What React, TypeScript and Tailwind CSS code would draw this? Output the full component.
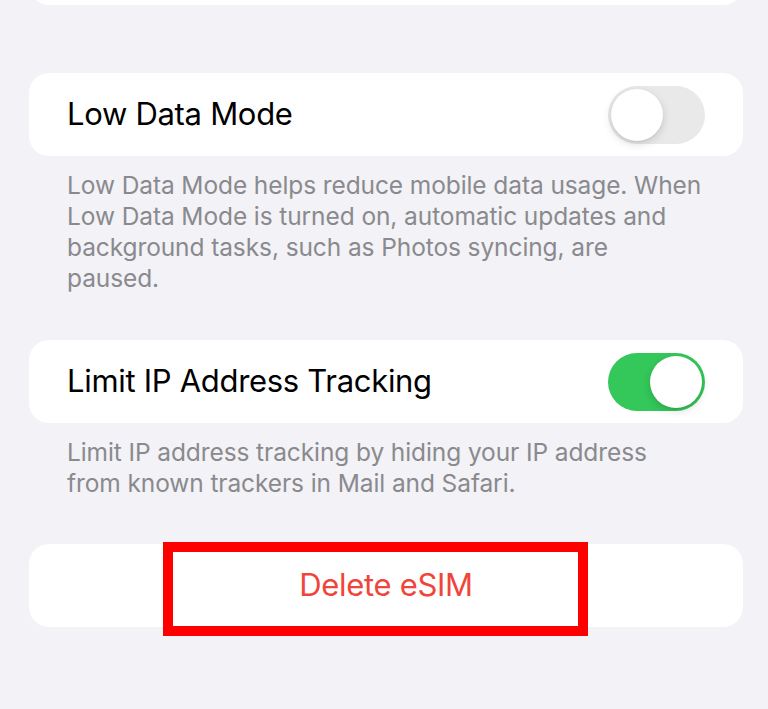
import React from 'react';

const font = { fontFamily: 'Inter, "Noto Sans", "Liberation Sans", sans-serif' };

interface ToggleProps {
  on: boolean;
}

const Toggle: React.FC<ToggleProps> = ({ on }) => (
  <div
    className={`flex items-center w-[97px] h-[58px] rounded-full p-[3px] ${
      on ? 'bg-[#34c759] justify-end' : 'bg-[#e9e9ea] justify-start'
    }`}
  >
    <div className="w-[52px] h-[52px] rounded-full bg-white shadow-[0_3px_8px_rgba(0,0,0,0.15),0_1px_1px_rgba(0,0,0,0.06)]" />
  </div>
);

interface RowProps {
  title: string;
  on: boolean;
}

const ToggleRow: React.FC<RowProps> = ({ title, on }) => (
  <div className="flex items-center justify-between h-[83px] bg-white rounded-[20px] pl-[38px] pr-[38px]">
    <span className="text-[31px] text-black tracking-[-0.3px]">{title}</span>
    <Toggle on={on} />
  </div>
);

const Footnote: React.FC<{ children: React.ReactNode; bottom: string }> = ({ children, bottom }) => (
  <p className={`pl-[38px] pt-[14px] ${bottom} text-[24.5px] leading-[31px] text-[#8a8a8e] tracking-[-0.1px] whitespace-nowrap`}>
    {children}
  </p>
);

export default function App() {
  return (
    <div className="w-[768px] h-[709px] bg-[#f2f2f7] overflow-hidden" style={font}>
      <div className="pl-[29px] pr-[25px]">
        <div className="h-[60px] -mt-[55px] bg-white rounded-[20px]" />

        <div className="mt-[68px]">
          <ToggleRow title="Low Data Mode" on={false} />
        </div>
        <Footnote bottom="pb-[46px]">
          Low Data Mode helps reduce mobile data usage. When
          <br />
          Low Data Mode is turned on, automatic updates and
          <br />
          background tasks, such as Photos syncing, are
          <br />
          paused.
        </Footnote>

        <ToggleRow title="Limit IP Address Tracking" on={true} />
        <Footnote bottom="pb-[45px]">
          Limit IP address tracking by hiding your IP address
          <br />
          from known trackers in Mail and Safari.
        </Footnote>

        <div className="relative flex items-center justify-center h-[83px] bg-white rounded-[20px]">
          <span className="text-[31px] text-[#f0453a] tracking-[-0.3px]">Delete eSIM</span>
          <div className="absolute left-[134px] top-[-2px] w-[425px] h-[94px] border-[10px] border-[#ff0000]" />
        </div>
      </div>
    </div>
  );
}
